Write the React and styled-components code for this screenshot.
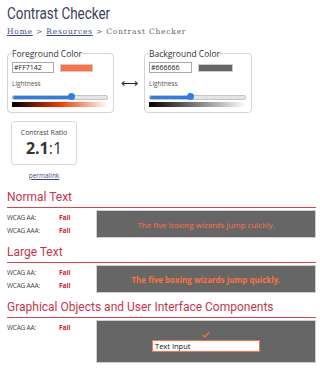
import React from 'react';
import styled, { createGlobalStyle } from 'styled-components';

const GlobalStyle = createGlobalStyle`
  body {
    margin: 0;
    background: #fff;
    font-family: "Open Sans", "Liberation Sans", sans-serif;
    color: #333;
  }
`;

const Page = styled.div`
  width: 309px;
  padding: 1px 4px 0 7px;
`;

const Title = styled.h1`
  margin: 0;
  font-family: Roboto, "Liberation Sans", sans-serif;
  font-weight: 400;
  font-size: 17px;
  line-height: 24px;
  color: #3b3f5c;

  span {
    display: inline-block;
    transform: scaleX(0.79);
    transform-origin: left center;
  }
`;

const Crumbs = styled.div`
  margin-top: 2px;
  font-family: "DejaVu Serif", serif;
  font-size: 7.5px;
  letter-spacing: 0.8px;
  line-height: 10px;
  color: #666;

  a {
    color: #3b4a8c;
    text-decoration: underline;
  }
`;

const Pickers = styled.div`
  display: flex;
  align-items: center;
  margin-top: 11px;
`;

const Fieldset = styled.fieldset`
  box-sizing: border-box;
  width: ${(p) => p.$w}px;
  height: 65px;
  margin: 0;
  min-width: 0;
  padding: 0 5px 0 4px;
  border: 1px solid #d4d4d4;
  border-radius: 4px;

  legend {
    padding: 0;
    font-size: 8.5px;
    line-height: 11px;
    color: #333;
  }
`;

const Swap = styled.div`
  width: 30px;
  text-align: center;
  font-size: 12px;
  color: #222;
  margin-top: 4px;
`;

const InputRow = styled.div`
  display: flex;
  align-items: center;
  gap: 6px;
  margin-top: 3px;
`;

const HexInput = styled.div`
  box-sizing: border-box;
  width: ${(p) => p.$w}px;
  height: 11px;
  border: 1px solid #aaa;
  font-size: 7px;
  line-height: 9px;
  padding-left: 1px;
  color: #222;
`;

const Swatch = styled.div`
  box-sizing: border-box;
  width: ${(p) => p.$w}px;
  height: 8px;
  border: 1px solid #ccc;
  background: ${(p) => p.$c};
`;

const Label = styled.div`
  margin-top: 6px;
  font-size: 6.5px;
  line-height: 9px;
  color: #555;
`;

const Slider = styled.div`
  position: relative;
  height: 3px;
  margin-top: 7px;
  border: 1px solid #c4c4c4;
  border-radius: 2px;
  background: #e4e4e4;
`;

const Fill = styled.div`
  height: 100%;
  border-radius: 2px;
  background: #2b7de9;
`;

const Thumb = styled.div`
  position: absolute;
  top: -3px;
  width: 7px;
  height: 7px;
  margin-left: -4px;
  border-radius: 50%;
  background: #2b7de9;
`;

const Gradient = styled.div`
  height: 5px;
  margin-top: 2px;
  background: linear-gradient(to right, #000, ${(p) => p.$mid}, #fff);
`;

const RatioBox = styled.div`
  box-sizing: border-box;
  width: 66px;
  height: 44px;
  margin: 8px 0 0 4px;
  border: 1px solid #d8d8d8;
  border-radius: 3px;
  text-align: center;
  padding-top: 6px;
`;

const RatioLabel = styled.div`
  font-size: 7px;
  line-height: 10px;
  color: #444;
`;

const RatioValue = styled.div`
  font-size: 16px;
  line-height: 20px;
  color: #333;

  b {
    font-weight: 700;
  }
`;

const Permalink = styled.a`
  display: block;
  width: 74px;
  margin-top: 6px;
  text-align: center;
  font-size: 6.5px;
  line-height: 9px;
  color: #3b4a8c;
  text-decoration: underline;
`;

const Heading = styled.h2`
  margin: ${(p) => p.$top}px 0 0;
  padding-bottom: 2px;
  border-bottom: 1px solid #d9434f;
  font-family: Roboto, "Liberation Sans", sans-serif;
  font-weight: 400;
  font-size: 12px;
  line-height: 16px;
  color: #c8344a;
`;

const Section = styled.div`
  display: grid;
  grid-template-columns: 89px 1fr;
  margin-top: 2px;
`;

const Results = styled.div`
  padding-top: 1px;
`;

const Result = styled.div`
  display: flex;
  font-size: 6.5px;
  line-height: 13px;
  color: #444;

  span:first-child {
    width: 52px;
    letter-spacing: -0.2px;
  }

  span:last-child {
    font-weight: 700;
    color: #d1192e;
  }
`;

const Sample = styled.div`
  box-sizing: border-box;
  height: ${(p) => p.$h}px;
  border: 1px solid #cfcfcf;
  background: #666666;
  color: #ff7142;
  display: flex;
  flex-direction: column;
  align-items: center;
  justify-content: center;
  font-size: 8px;
  font-weight: ${(p) => (p.$bold ? 700 : 400)};
`;

const Check = styled.svg`
  display: block;
  margin-bottom: 2px;
`;

const TextInput = styled.div`
  box-sizing: border-box;
  width: 108px;
  height: 12px;
  border: 1px solid #ff7142;
  background: #fff;
  color: #111;
  font-size: 7.5px;
  line-height: 10px;
  padding-left: 2px;
`;

const ResultRows = ({ rows }) => (
  <Results>
    {rows.map((r) => (
      <Result key={r}>
        <span>{r}</span>
        <span>Fail</span>
      </Result>
    ))}
  </Results>
);

const ColorPicker = ({ legend, hex, color, w, inputW, swatchW, pos, mid }) => (
  <Fieldset $w={w}>
    <legend>{legend}</legend>
    <InputRow>
      <HexInput $w={inputW}>{hex}</HexInput>
      <Swatch $w={swatchW} $c={color} />
    </InputRow>
    <Label>Lightness</Label>
    <Slider>
      <Fill style={{ width: `${pos}%` }} />
      <Thumb style={{ left: `${pos}%` }} />
    </Slider>
    <Gradient $mid={mid} />
  </Fieldset>
);

const App = () => (
  <Page>
    <GlobalStyle />
    <Title>
      <span>Contrast Checker</span>
    </Title>
    <Crumbs>
      <a href="#home">Home</a> &gt; <a href="#resources">Resources</a> &gt; Contrast Checker
    </Crumbs>
    <Pickers>
      <ColorPicker
        legend="Foreground Color"
        hex="#FF7142"
        color="#ff7142"
        w={107}
        inputW={42}
        swatchW={33}
        pos={63}
        mid="hsl(14, 100%, 48%)"
      />
      <Swap>⟷</Swap>
      <ColorPicker
        legend="Background Color"
        hex="#666666"
        color="#666666"
        w={108}
        inputW={43}
        swatchW={35}
        pos={43}
        mid="#808080"
      />
    </Pickers>
    <RatioBox>
      <RatioLabel>Contrast Ratio</RatioLabel>
      <RatioValue>
        <b>2.1</b>:1
      </RatioValue>
    </RatioBox>
    <Permalink href="#permalink">permalink</Permalink>

    <Heading $top={9}>Normal Text</Heading>
    <Section>
      <ResultRows rows={['WCAG AA:', 'WCAG AAA:']} />
      <Sample $h={28}>The five boxing wizards jump cuickly.</Sample>
    </Section>

    <Heading $top={6}>Large Text</Heading>
    <Section>
      <ResultRows rows={['WCAG AA:', 'WCAG AAA:']} />
      <Sample $h={28} $bold>
        The five boxing wizards jump quickly.
      </Sample>
    </Section>

    <Heading $top={6}>Graphical Objects and User Interface Components</Heading>
    <Section>
      <ResultRows rows={['WCAG AA:']} />
      <Sample $h={43}>
        <Check width="8" height="7" viewBox="0 0 8 7">
          <path d="M0.8 3.8 L3 6 L7.2 0.8" fill="none" stroke="#ff7142" strokeWidth="1.2" />
        </Check>
        <TextInput>Text Input</TextInput>
      </Sample>
    </Section>
  </Page>
);

export default App;
